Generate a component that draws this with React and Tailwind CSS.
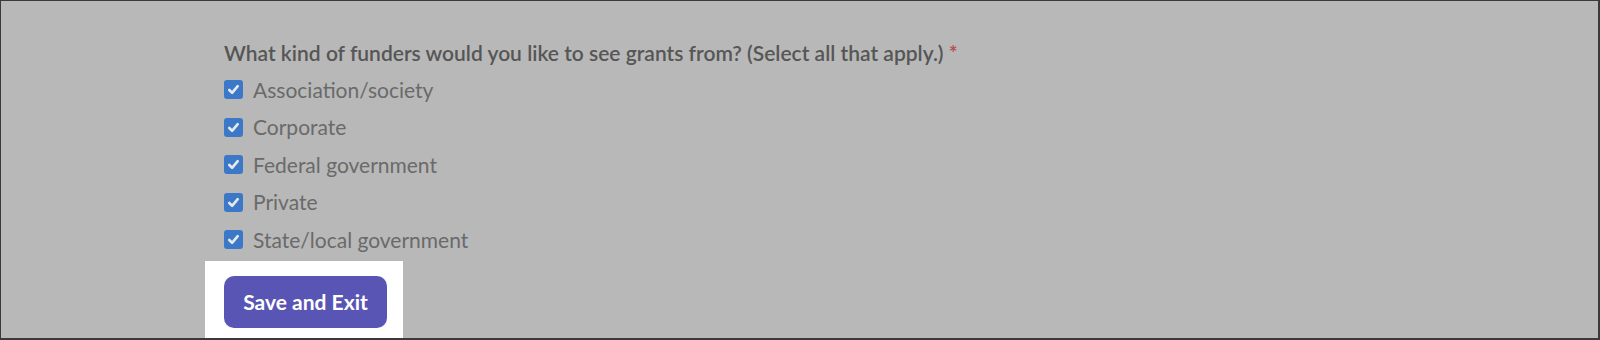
import React from "react";

const options = [
  "Association/society",
  "Corporate",
  "Federal government",
  "Private",
  "State/local government",
];

function Check() {
  return (
    <span className="flex h-[19px] w-[19px] shrink-0 items-center justify-center rounded-[3px] bg-[#3b78c8]">
      <svg viewBox="0 0 16 16" className="h-[15px] w-[15px]" fill="none">
        <path d="M3.5 8.5 L6.5 11.5 L12.5 4.5" stroke="#e8e8e8" strokeWidth="2.8" strokeLinecap="round" strokeLinejoin="round" />
      </svg>
    </span>
  );
}

export default function App() {
  return (
    <div
      className="box-border h-[340px] w-[1600px] overflow-hidden border-t border-l border-r-2 border-b-2 border-[#3a3a3a] bg-[#b8b8b8]"
      style={{ fontFamily: "Lato, 'Open Sans', sans-serif" }}
    >
      <div className="pl-[223px] pt-[39px]">
        <div className="text-[21px] font-semibold leading-[26px] text-[#565656]">
          What kind of funders would you like to see grants from? (Select all that apply.){" "}
          <span className="text-[#b5504e]">*</span>
        </div>
        <div className="mt-[5px] flex flex-col">
          {options.map((o) => (
            <label key={o} className="flex h-[37.5px] items-center gap-[10px]">
              <Check />
              <span className="text-[21px] leading-[26px] text-[#6a6a6a]">{o}</span>
            </label>
          ))}
        </div>
        <div className="ml-[-19px] mt-[2px] w-fit bg-white pl-[19px] pr-[16px] pt-[15px] pb-[12px]">
          <button className="h-[52px] w-[163px] rounded-[10px] bg-[#5955b4] text-[21px] font-bold text-white">
            Save and Exit
          </button>
        </div>
      </div>
    </div>
  );
}
